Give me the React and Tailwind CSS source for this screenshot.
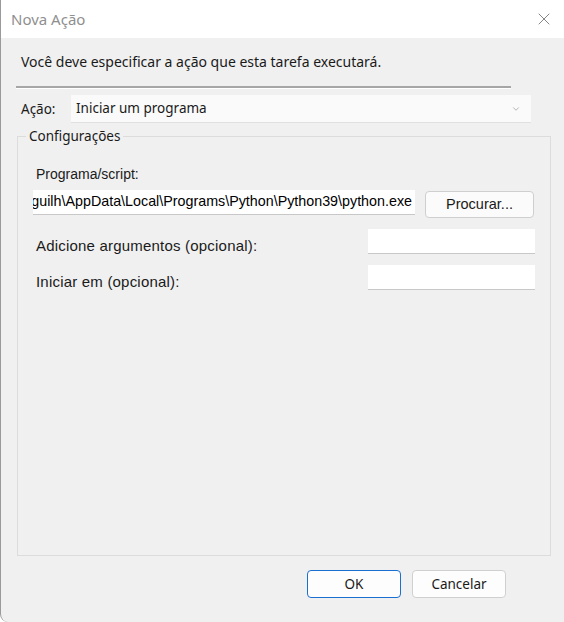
import { X, ChevronDown } from "lucide-react";

const SEGOE = { fontFamily: '"Noto Sans", "Open Sans", sans-serif' };

function TextField({ value, className = "" }) {
  return (
    <div className={`h-[25px] bg-white border-b border-[#c8c8c8] flex items-center justify-end overflow-hidden ${className}`}>
      {value && <span className="whitespace-nowrap pr-[3px] text-[14.3px] text-black">{value}</span>}
    </div>
  );
}

export default function App() {
  return (
    <div
      className="w-[564px] h-[622px] flex flex-col bg-[#f0f0f0] border-l border-[#9a9a9a] rounded-bl-[8px] overflow-hidden"
      style={{ fontFamily: '"Liberation Sans", Arial, sans-serif' }}
    >
      {/* title bar */}
      <div className="h-[38px] bg-white flex items-center justify-between pl-[10px] pr-[10px] shrink-0">
        <span className="text-[15px] text-[#8f8f8f]" style={SEGOE}>Nova Ação</span>
        <X size={20} strokeWidth={1} color="#6e6e6e" />
      </div>

      <div className="flex-1 flex flex-col px-[15px]">
        <p className="pl-[5px] pt-[13px] text-[14px] text-[#1a1a1a] leading-[22px]" style={SEGOE}>
          Você deve especificar a ação que esta tarefa executará.
        </p>
        <div className="mt-[13px] w-[495px] border-t-2 border-[#a6a6a6] border-b border-b-white" />

        <div className="flex items-center mt-[6px]">
          <span className="w-[55px] pl-[5px] text-[13.5px] text-[#1a1a1a]" style={SEGOE}>Ação:</span>
          <div className="w-[460px] h-[28px] bg-[#fafafa] border-b border-[#e0e0e0] flex items-center justify-between pl-[5px] pr-[10px]">
            <span className="text-[13.5px] text-[#1a1a1a]" style={SEGOE}>Iniciar um programa</span>
            <ChevronDown size={10} strokeWidth={1.5} color="#8a8a8a" />
          </div>
        </div>

        {/* group box */}
        <div className="relative mt-[13px] ml-[1px] w-[534px] h-[420px] border border-[#dcdcdc]">
          <span
            className="absolute -top-[11px] left-[8px] px-[3px] bg-[#f0f0f0] text-[13.5px] text-[#1a1a1a] leading-[20px]"
            style={SEGOE}
          >
            Configurações
          </span>

          <div className="pt-[29px] pl-[18px] text-[14px] text-[#1a1a1a] leading-[16px]">Programa/script:</div>
          <div className="flex items-start mt-[8px] pl-[15px]">
            <TextField
              className="w-[382px]"
              value={"C:\\Users\\guilh\\AppData\\Local\\Programs\\Python\\Python39\\python.exe"}
            />
            <button className="ml-[10px] w-[109px] h-[27px] mt-[1px] rounded-[4px] border border-[#cfcfcf] bg-[#fbfbfb] text-[14.5px] text-[#1a1a1a]">
              Procurar...
            </button>
          </div>

          <div className="flex items-start mt-[11px]">
            <span className="w-[350px] pl-[18px] pt-[7px] text-[15px] tracking-[0.2px] leading-[20px] text-[#1a1a1a]">
              Adicione argumentos (opcional):
            </span>
            <TextField className="w-[167px]" />
          </div>
          <div className="flex items-start mt-[9px]">
            <span className="w-[350px] pl-[18px] pt-[7px] text-[15px] tracking-[0.2px] leading-[20px] text-[#1a1a1a]">
              Iniciar em (opcional):
            </span>
            <TextField className="w-[167px]" />
          </div>
        </div>

        <div className="flex justify-end gap-[11px] mt-[14px] pr-[43px]">
          <button
            className="w-[94px] h-[28px] rounded-[4px] border border-[#1a6fd0] bg-[#fdfdfd] text-[13.5px] text-[#1a1a1a]"
            style={SEGOE}
          >
            OK
          </button>
          <button
            className="w-[94px] h-[28px] rounded-[4px] border border-[#d0d0d0] bg-[#fdfdfd] text-[13.5px] text-[#1a1a1a]"
            style={SEGOE}
          >
            Cancelar
          </button>
        </div>
      </div>
    </div>
  );
}
